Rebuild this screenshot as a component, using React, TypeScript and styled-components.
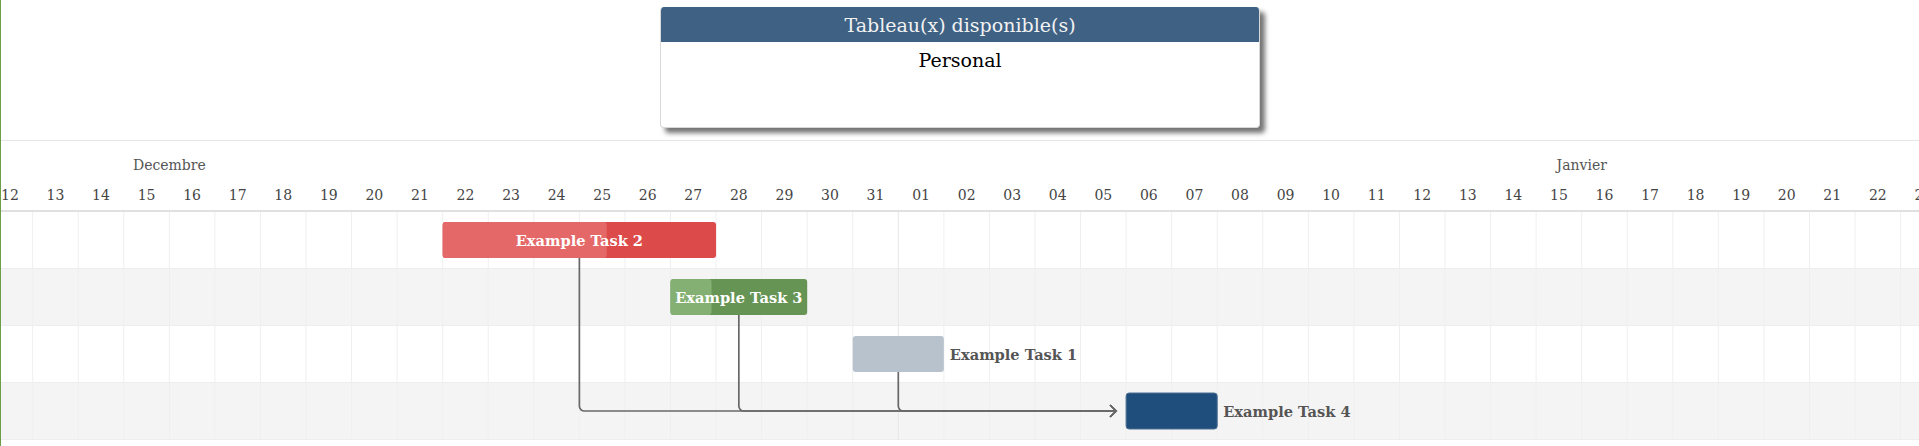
import styled, { createGlobalStyle } from "styled-components";

const GlobalStyle = createGlobalStyle`
  html, body {
    margin: 0;
    padding: 0;
    background: #fff;
    overflow: hidden;
  }
  body {
    font-family: "DejaVu Serif", serif;
  }
`;

const Page = styled.div`
  display: flex;
  flex-direction: column;
  height: 100vh;
  border-left: 1px solid #6c9f45;
  box-sizing: border-box;
`;

const TopBar = styled.div`
  display: flex;
  justify-content: center;
  align-items: flex-start;
  height: 140px;
  padding-top: 7px;
  box-sizing: border-box;
`;

const BoardCard = styled.div`
  width: 600px;
  height: 121px;
  background: #fff;
  border: 1px solid #d8d8d8;
  border-top: none;
  border-radius: 4px;
  box-sizing: border-box;
  overflow: hidden;
  box-shadow: 5px 5px 5px rgba(0, 0, 0, 0.55);
`;

const CardHeader = styled.div`
  height: 35px;
  display: flex;
  align-items: center;
  justify-content: center;
  background: #3f6184;
  color: #f2f2f2;
  font-size: 19px;
`;

const BoardItem = styled.div`
  padding-top: 6px;
  text-align: center;
  font-size: 19px;
  color: #000;
  line-height: 24px;
`;

const GanttWrap = styled.div`
  flex: 1;
  border-top: 1px solid #e6e6e6;
  overflow: hidden;
`;

const MonthText = styled.text`
  font-size: 14px;
  fill: #555;
  text-anchor: middle;
`;

const DayText = styled.text`
  font-size: 14px;
  fill: #444;
  text-anchor: middle;
`;

const BarLabel = styled.text<{ $outside?: boolean }>`
  font-size: 14.6px;
  font-weight: bold;
  fill: ${(p) => (p.$outside ? "#555" : "#fff")};
  text-anchor: ${(p) => (p.$outside ? "start" : "middle")};
  dominant-baseline: central;
`;

const Arrow = styled.path`
  fill: none;
  stroke: #686868;
  stroke-width: 1.7;
`;

const COL = 45.56;
const X0 = -13.9;
const HEADER_H = 71;
const ROW_H = 57;
const BAR_Y = 10;
const BAR_H = 36;

const days: string[] = [];
for (let d = 12; d <= 31; d++) days.push(String(d));
for (let d = 1; d <= 24; d++) days.push(String(d).padStart(2, "0"));

type Task = {
  name: string;
  col: number;
  span: number;
  row: number;
  progress: number;
  color: string;
  progressColor: string;
  stroke?: string;
  outside?: boolean;
};

const tasks: Task[] = [
  { name: "Example Task 2", col: 10, span: 6, row: 0, progress: 0.6, color: "#dc4a4a", progressColor: "#e56868" },
  { name: "Example Task 3", col: 15, span: 3, row: 1, progress: 0.3, color: "#659454", progressColor: "#84b173" },
  { name: "Example Task 1", col: 19, span: 2, row: 2, progress: 0, color: "#b8c2cc", progressColor: "#b8c2cc", outside: true },
  { name: "Example Task 4", col: 25, span: 2, row: 3, progress: 0, color: "#1f4e7c", progressColor: "#1f4e7c", stroke: "#4d6f92", outside: true },
];

const colX = (i: number) => X0 + i * COL;
const barTop = (row: number) => HEADER_H + row * ROW_H + BAR_Y;

function GanttChart() {
  const width = 1919;
  const height = 305;
  const target = tasks[3];
  const endY = barTop(target.row) + BAR_H / 2;
  const endX = colX(target.col) - 10;

  return (
    <svg width={width} height={height} viewBox={`0 0 ${width} ${height}`}>
      {[0, 1, 2, 3].map((r) => (
        <rect
          key={r}
          x={0}
          y={HEADER_H + r * ROW_H}
          width={width}
          height={ROW_H}
          fill={r % 2 ? "#f4f4f4" : "#fff"}
        />
      ))}
      {[1, 2, 3, 4].map((r) => (
        <line
          key={r}
          x1={0}
          x2={width}
          y1={HEADER_H + r * ROW_H - 0.5}
          y2={HEADER_H + r * ROW_H - 0.5}
          stroke="#ebeff2"
        />
      ))}
      {days.map((_, i) => (
        <line
          key={i}
          x1={colX(i)}
          x2={colX(i)}
          y1={HEADER_H}
          y2={HEADER_H + 4 * ROW_H}
          stroke={i === 20 ? "#e6e6e6" : "#efefef"}
          strokeWidth={1}
        />
      ))}
      <rect x={0} y={HEADER_H - 2} width={width} height={2} fill="#e0e0e0" />

      <MonthText x={colX(-11) + COL * 15} y={29}>
        Decembre
      </MonthText>
      <MonthText x={colX(20) + COL * 15} y={29}>
        Janvier
      </MonthText>
      {days.map((d, i) => (
        <DayText key={i} x={colX(i) + COL / 2} y={59}>
          {d}
        </DayText>
      ))}

      {tasks.slice(0, 3).map((t) => {
        const sx = colX(t.col) + (t.span * COL) / 2;
        const sy = barTop(t.row) + BAR_H;
        return (
          <Arrow
            key={t.name}
            d={`M ${sx} ${sy} V ${endY - 5} a 5 5 0 0 0 5 5 L ${endX} ${endY} m -6 -6 l 6 6 l -6 6`}
          />
        );
      })}

      {tasks.map((t) => {
        const x = colX(t.col);
        const w = t.span * COL;
        const y = barTop(t.row);
        return (
          <g key={t.name}>
            <rect
              x={x}
              y={y}
              width={w}
              height={BAR_H}
              rx={3}
              fill={t.color}
              stroke={t.stroke ?? "none"}
            />
            {t.progress > 0 && (
              <rect
                x={x}
                y={y}
                width={w * t.progress}
                height={BAR_H}
                rx={3}
                fill={t.progressColor}
              />
            )}
            <BarLabel
              $outside={t.outside}
              x={t.outside ? x + w + 6 : x + w / 2}
              y={y + BAR_H / 2}
            >
              {t.name}
            </BarLabel>
          </g>
        );
      })}
    </svg>
  );
}

export default function App() {
  return (
    <>
      <GlobalStyle />
      <Page>
        <TopBar>
          <BoardCard>
            <CardHeader>Tableau(x) disponible(s)</CardHeader>
            <BoardItem>Personal</BoardItem>
          </BoardCard>
        </TopBar>
        <GanttWrap>
          <GanttChart />
        </GanttWrap>
      </Page>
    </>
  );
}
